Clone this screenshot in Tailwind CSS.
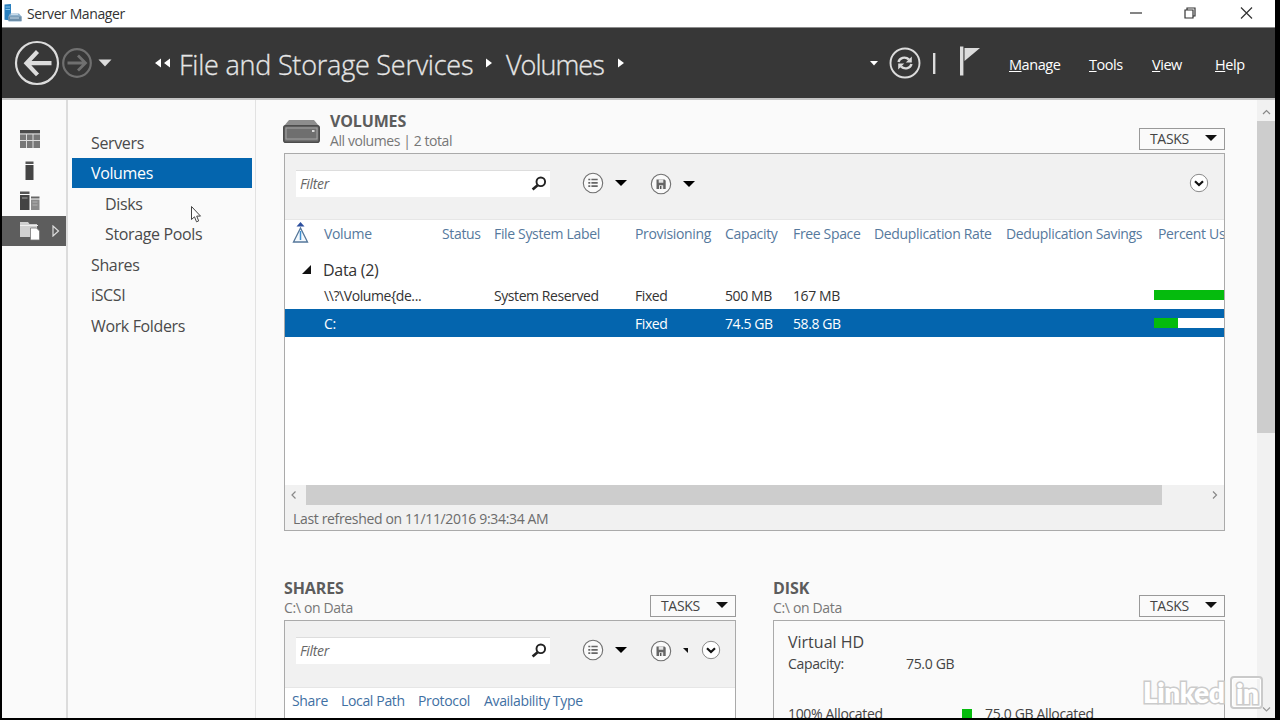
<!DOCTYPE html>
<html lang="en">
    <head>
        <meta charset="utf-8" />
        <title>Server Manager</title>
        <script src="https://cdn.jsdelivr.net/npm/@tailwindcss/browser@4"></script>
    </head>
    <body class="w-[1280px] h-[720px] overflow-hidden bg-black font-['Open_Sans','Noto_Sans',sans-serif]">
        <!-- shared icons -->
        <svg class="hidden">
            <symbol id="caret" viewBox="0 0 12 6"><path d="M0 0h12L6 6z" fill="currentColor" /></symbol>
            <symbol id="search" viewBox="0 0 16 16">
                <circle cx="9.8" cy="5.8" r="4.3" fill="none" stroke="#222" stroke-width="1.9" />
                <path d="M6.6 9.2L1.6 13.6" stroke="#222" stroke-width="2.6" />
            </symbol>
            <symbol id="list" viewBox="0 0 22 22">
                <circle cx="11" cy="11" r="9.7" fill="#fafafa" stroke="#707070" stroke-width="1.1" />
                <path d="M6.3 7.5h2M6.3 10.8h2M6.3 14.1h2M9.4 7.5h6.3M9.4 10.8h6.3M9.4 14.1h6.3" stroke="#666" stroke-width="1.7" />
            </symbol>
            <symbol id="save" viewBox="0 0 22 22">
                <circle cx="11" cy="11" r="9.7" fill="#fafafa" stroke="#707070" stroke-width="1.1" />
                <path d="M6.5 6.5h8l1.2 1.2v8.3H6.5z" fill="#666" />
                <path d="M8.7 6.5h4.6v3.2H8.7zM9 12.3h4.2V16H9z" fill="#e4e4e4" />
                <path d="M10 13h1.4v3H10z" fill="#555" />
            </symbol>
            <symbol id="expand" viewBox="0 0 20 20">
                <circle cx="10" cy="10" r="8.7" fill="#fff" stroke="#8a8a8a" stroke-width="1" />
                <path d="M6 8.3l4 3.8 4-3.8" fill="none" stroke="#111" stroke-width="2.2" />
            </symbol>
        </svg>

        <div class="relative flex flex-col w-[1273px] h-[718px] ml-[2px] overflow-hidden bg-[#fafafa] whitespace-nowrap">
            <div class="flex items-center h-[27px] bg-white shrink-0 pl-[2px] pb-px">
                <svg class="w-[18px] h-[20px]" viewBox="0 0 18 20">
                    <path d="M0.5 1.5L7 1v16.5l-6.5-.8z" fill="#2a80bf" />
                    <path d="M1.5 4h4.5M1.5 6.5h4.5" stroke="#7fc4ee" stroke-width="1" />
                    <path d="M6 10.5h9l2.5 3v5H4.500v-5z" fill="#8fb2cd" />
                    <path d="M4.500 13.500h13v4.500H4.500z" fill="#6d8ea8" />
                    <path d="M7 11.500h7M6 15h9" stroke="#c9dceb" />
                </svg>
                <p class="ml-[5px] text-[14px] tracking-[-0.4px] text-[#333]">Server Manager</p>
                <svg class="ml-auto mr-[22px] w-[124px] h-[16px]" viewBox="0 0 124 16" fill="none" stroke="#333" stroke-width="1.2">
                    <path d="M1 8h12" />
                    <path d="M56 5h8v8h-8zM58 5V3h8v8h-2" />
                    <path d="M112 2.500l11 11M123 2.500l-11 11" />
                </svg>
            </div>

            <header class="flex items-center h-[73px] shrink-0 bg-[#373737] border-t border-[#8c8c8c] border-b-2 border-b-[#c4c4c4] text-white">
                <svg class="w-[110px] h-[46px] ml-[12px]" viewBox="0 0 110 46" fill="none">
                    <circle cx="23" cy="23" r="21" stroke="#dcdcdc" stroke-width="2.200" />
                    <path d="M37.500 23.200H12M23.500 11.500L12.500 23.200l11 11.700" stroke="#dcdcdc" stroke-width="4.200" />
                    <circle cx="63" cy="23" r="13.800" stroke="#707070" stroke-width="2.200" />
                    <path d="M53.500 23h17M64 15.500l7.500 7.500-7.500 7.500" stroke="#707070" stroke-width="2.800" />
                    <path d="M84.500 19.500h13l-6.500 7z" fill="#dcdcdc" />
                </svg>
                <svg class="ml-[30px] w-[16px] h-[10px]" viewBox="0 0 16 10" fill="#fff"><path d="M7 .5v9L1 5zM16 .5v9l-6-4.500z" /></svg>
                <h1 class="ml-[9px] pt-[4px] text-[27px] font-light tracking-[-0.23px] text-[#e6e6e6] w-[296px] [-webkit-text-stroke:0.3px_#e6e6e6]">File and Storage Services</h1>
                <svg class="ml-[11px] w-[7px] h-[10px]" viewBox="0 0 7 10" fill="#fff"><path d="M0 .5v9L6 5z" /></svg>
                <h1 class="ml-[13px] pt-[4px] text-[27px] font-light tracking-[-1px] text-[#e6e6e6] w-[102px] [-webkit-text-stroke:0.3px_#e6e6e6]">Volumes</h1>
                <svg class="ml-[10px] w-[7px] h-[10px]" viewBox="0 0 7 10" fill="#fff"><path d="M0 .5v9L6 5z" /></svg>
                <svg class="ml-auto w-[112px] h-[36px]" viewBox="0 0 112 36" fill="none">
                    <path d="M1 16h8l-4 4.500z" fill="#fff" />
                    <circle cx="36" cy="18" r="14.500" stroke="#dcdcdc" stroke-width="1.900" />
                    <path d="M29.500 17c1-4 6.500-6 10.500-2.500M42.500 19c-1 4-6.500 6-10.500 2.500" stroke="#dcdcdc" stroke-width="2.400" />
                    <path d="M42.800 11.500v6h-6zM29.200 24.500v-6h6z" fill="#dcdcdc" />
                    <path d="M65.200 8v21" stroke="#dcdcdc" stroke-width="2.400" />
                    <path d="M92.700 1.500v29" stroke="#dcdcdc" stroke-width="3.400" />
                    <path d="M95.500 3h15.500L95.500 16z" fill="#dcdcdc" />
                </svg>
                <nav class="flex pt-[3px] text-[14.500px] tracking-[-0.45px] ml-[28px] mr-[29px]">
                    <p class="w-[80px]"><u>M</u>anage</p>
                    <p class="w-[63px]"><u>T</u>ools</p>
                    <p class="w-[63px]"><u>V</u>iew</p>
                    <p class="w-[31px]"><u>H</u>elp</p>
                </nav>
            </header>

            <div class="flex flex-1 min-h-0">
                <aside class="flex flex-col w-[64px] shrink-0 pt-[24px]">
                    <svg class="ml-[18px] w-[20px] h-[92px]" viewBox="0 0 20 92">
                        <path d="M0 6h20v18H0z" fill="#777" />
                        <path d="M0 6h20v3H0z" fill="#4c4c4c" />
                        <path d="M0 10h20M0 16.500h20M6.500 10v14M13 10v14" stroke="#ddd" />
                        <path d="M5.500 41h8v15h-8z" fill="#444" />
                        <path d="M5.500 37.500h8v2.500h-8z" fill="#555" />
                        <path d="M0 71h9.500v15H0z" fill="#444" />
                        <path d="M0 67.500h9.500V70H0z" fill="#555" />
                        <path d="M11 75.500h8.500V86H11z" fill="#8a8a8a" />
                        <path d="M11 72.500h8.500V74.500H11z" fill="#666" />
                        <path d="M2 74h5.500M12.500 78h5M12.500 81h5" stroke="#bbb" stroke-width=".8" />
                    </svg>
                    <div class="flex items-center h-[30px] bg-[#5d5d5d]">
                        <svg class="ml-[18px] w-[20px] h-[20px]" viewBox="0 0 20 20">
                            <path d="M0 1h8l1.500 2H17v13H0z" fill="#d0d0d0" />
                            <path d="M0 4.500h18" stroke="#efefef" />
                            <path d="M10.500 7h6l3 3v9h-9z" fill="#fff" stroke="#777" stroke-width=".8" />
                        </svg>
                        <svg class="ml-[12px] w-[8px] h-[12px]" viewBox="0 0 8 12"><path d="M1 1v10l5.500-5z" fill="none" stroke="#ddd" stroke-width="1.200" /></svg>
                    </div>
                </aside>

                <nav class="w-[190px] shrink-0 border-l-2 border-r border-l-[#dcdcdc] border-r-[#e2e2e2] pl-[4px] pr-[3px] pt-[27px] text-[16px] leading-[30.5px] tracking-[-0.36px] text-[#4a4a4a]">
                    <p class="pl-[19px] relative top-px">Servers</p>
                    <p class="pl-[19px] bg-[#0465ae] text-white">Volumes</p>
                    <p class="pl-[33px] relative top-px">Disks</p>
                    <p class="pl-[33px]">Storage Pools</p>
                    <p class="pl-[19px] relative top-px">Shares</p>
                    <p class="pl-[19px]">iSCSI</p>
                    <p class="pl-[19px] relative top-px">Work Folders</p>
                </nav>

                <main class="flex flex-col flex-1 pl-[28px] pr-[32px] min-w-0 text-[14px] tracking-[-0.34px]">
                    <div class="flex h-[53px] shrink-0">
                        <svg class="mt-[19px] -ml-px w-[37px] h-[26px]" viewBox="0 0 37 26">
                            <path d="M6 1h25l5 6H1z" fill="#8d8d8d" />
                            <rect x=".8" y="6.800" width="35.400" height="16.400" rx="2" fill="#6f6f6f" stroke="#4c4c4c" stroke-width="1.600" />
                            <rect x="3" y="9" width="31" height="11" fill="none" stroke="#a5a5a5" />
                            <path d="M29 12h2.500" stroke="#fff" stroke-width="1.500" />
                        </svg>
                        <div class="ml-[10px] pt-[11px]">
                            <h2 class="text-[16px] leading-[20px] font-bold tracking-[-0.15px] text-[#5c5c5c]">VOLUMES</h2>
                            <p class="leading-[20px] tracking-[-0.42px] text-[#777]">All volumes | 2 total</p>
                        </div>
                        <div class="flex items-center justify-between w-[86px] h-[22px] mt-[28px] ml-auto border border-[#999] pl-[10px] pr-[7px] pb-[2px] text-[#444]">
                            TASKS <svg class="w-[12px] h-[6px] text-[#111]"><use href="#caret" /></svg>
                        </div>
                    </div>

                    <section class="flex flex-col h-[378px] shrink-0 border border-[#aaa] bg-white">
                        <div class="flex items-start h-[66px] shrink-0 bg-[#f1f1f1] border-b border-[#e6e6e6] pt-[16px] pl-[11px]">
                            <div class="flex items-center justify-between w-[254px] h-[27px] bg-white border-t border-[#ddd] pl-[4px] pr-[3px] pb-px">
                                <i class="text-[#666]">Filter</i>
                                <svg class="w-[16px] h-[16px]"><use href="#search" /></svg>
                            </div>
                            <svg class="ml-[32px] mt-[2px] w-[22px] h-[22px]"><use href="#list" /></svg>
                            <svg class="ml-[11px] mt-[10px] w-[12px] h-[6px]"><use href="#caret" /></svg>
                            <svg class="ml-[23px] mt-[3px] w-[22px] h-[22px]"><use href="#save" /></svg>
                            <svg class="ml-[11px] mt-[11px] w-[12px] h-[6px]"><use href="#caret" /></svg>
                            <svg class="ml-auto mr-[15px] mt-[3px] w-[20px] h-[20px]"><use href="#expand" /></svg>
                        </div>
                        <div class="flex-1 overflow-hidden">
                            <div class="grid grid-cols-[39px_118px_52px_141px_90px_68px_81px_132px_152px_66px] h-[29px] leading-[27px] text-[#56799d]">
                                <svg class="ml-[7px] mt-[2px] w-[17px] h-[22px]" viewBox="0 0 17 22">
                                    <path d="M8.500 6L1.500 20h14z" fill="#f4f9fd" stroke="#55779a" stroke-width="1.300" />
                                    <path d="M8.500 9v9" stroke="#3f8fd0" stroke-width="1.500" />
                                    <path d="M4.500 4.500l4-4.500 4 4.500z" fill="#2d4f9e" />
                                </svg>
                                <p>Volume</p>
                                <p>Status</p>
                                <p>File System Label</p>
                                <p>Provisioning</p>
                                <p>Capacity</p>
                                <p>Free Space</p>
                                <p>Deduplication Rate</p>
                                <p>Deduplication Savings</p>
                                <p class="overflow-hidden">Percent Used</p>
                            </div>
                            <div class="flex items-center h-[33px] pt-[8px] pl-[17px] text-[16px] tracking-[-0.3px] text-[#333]">
                                <svg class="w-[9px] h-[9px] mr-[12px]" viewBox="0 0 9 9"><path d="M9 0v9H0z" fill="#111" /></svg>
                                Data (2)
                            </div>
                            <div class="grid grid-cols-[39px_170px_141px_90px_68px_361px_70px] items-center h-[27px] tracking-[-0.42px] text-[#333]">
                                <p class="col-start-2">\\?\Volume{de...</p>
                                <p>System Reserved</p>
                                <p>Fixed</p>
                                <p>500 MB</p>
                                <p>167 MB</p>
                                <div class="h-[10px] mb-px bg-[#05bb0d]"></div>
                            </div>
                            <div class="grid grid-cols-[39px_170px_141px_90px_68px_361px_70px] items-center h-[28px] bg-[#0465ae] tracking-[-0.42px] text-white">
                                <p class="col-start-2">C:</p>
                                <p></p>
                                <p>Fixed</p>
                                <p>74.5 GB</p>
                                <p>58.8 GB</p>
                                <div class="h-[10px] bg-white"><div class="w-[24px] h-full bg-[#05bb0d]"></div></div>
                            </div>
                        </div>
                        <div class="flex items-center h-[20px] shrink-0 bg-[#f1f1f1] px-[6px]">
                            <svg class="w-[6px] h-[8px]" viewBox="0 0 6 8"><path d="M4.500 .5L1 4l3.500 3.500" fill="none" stroke="#888" stroke-width="1.200" /></svg>
                            <div class="ml-[9px] w-[856px] h-[20px] bg-[#cdcdcd]"></div>
                            <svg class="ml-auto w-[6px] h-[8px]" viewBox="0 0 6 8"><path d="M1 .5L4.500 4 1 7.500" fill="none" stroke="#888" stroke-width="1.200" /></svg>
                        </div>
                        <p class="h-[25px] shrink-0 leading-[27px] pl-[8px] bg-[#f1f1f1] text-[#6c6c6c]">Last refreshed on 11/11/2016 9:34:34 AM</p>
                    </section>

                    <div class="flex gap-[37px] mt-[47px]">
                        <div class="w-[452px]">
                            <div class="flex h-[42px]">
                                <div>
                                    <h2 class="text-[16px] leading-[20px] font-bold tracking-[-0.1px] text-[#5c5c5c]">SHARES</h2>
                                    <p class="leading-[20px] text-[#777]">C:\ on Data</p>
                                </div>
                                <div class="flex items-center justify-between w-[86px] h-[22px] mt-[17px] ml-auto border border-[#999] pl-[10px] pr-[7px] pb-[2px] text-[#444]">
                                    TASKS <svg class="w-[12px] h-[6px] text-[#111]"><use href="#caret" /></svg>
                                </div>
                            </div>
                            <section class="h-[120px] border border-[#aaa] bg-white">
                                <div class="flex items-start h-[67px] bg-[#f1f1f1] border-b border-[#e6e6e6] pt-[16px] pl-[11px]">
                                    <div class="flex items-center justify-between w-[254px] h-[27px] bg-white border-t border-[#ddd] pl-[4px] pr-[3px] pb-px">
                                        <i class="text-[#666]">Filter</i>
                                        <svg class="w-[16px] h-[16px]"><use href="#search" /></svg>
                                    </div>
                                    <svg class="ml-[32px] mt-[2px] w-[22px] h-[22px]"><use href="#list" /></svg>
                                    <svg class="ml-[11px] mt-[10px] w-[12px] h-[6px]"><use href="#caret" /></svg>
                                    <svg class="ml-[23px] mt-[3px] w-[22px] h-[22px]"><use href="#save" /></svg>
                                    <svg class="ml-[11px] mt-[11px] w-[5px] h-[5px]" viewBox="0 0 5 5"><path d="M0 0h5v5z" fill="#111" /></svg>
                                    <svg class="ml-auto mr-[14px] mt-[3px] w-[20px] h-[20px]"><use href="#expand" /></svg>
                                </div>
                                <div class="grid grid-cols-[49px_77px_66px_115px] pl-[7px] leading-[26px] text-[#3f70a3]">
                                    <p>Share</p>
                                    <p>Local Path</p>
                                    <p>Protocol</p>
                                    <p>Availability Type</p>
                                </div>
                            </section>
                        </div>

                        <div class="w-[452px]">
                            <div class="flex h-[42px]">
                                <div>
                                    <h2 class="text-[16px] leading-[20px] font-bold tracking-[-0.1px] text-[#5c5c5c]">DISK</h2>
                                    <p class="leading-[20px] text-[#777]">C:\ on Data</p>
                                </div>
                                <div class="flex items-center justify-between w-[86px] h-[22px] mt-[17px] ml-auto border border-[#999] pl-[10px] pr-[7px] pb-[2px] text-[#444]">
                                    TASKS <svg class="w-[12px] h-[6px] text-[#111]"><use href="#caret" /></svg>
                                </div>
                            </div>
                            <section class="h-[120px] border border-[#aaa] pl-[14px] pt-[10px] text-[#444]">
                                <h3 class="text-[16px] leading-[23px] tracking-[0px]">Virtual HD</h3>
                                <div class="flex leading-[20px]">
                                    <p class="w-[118px]">Capacity:</p>
                                    <p>75.0 GB</p>
                                </div>
                                <div class="flex items-center mt-[29px] leading-[22px]">
                                    <p class="w-[174px]">100% Allocated</p>
                                    <div class="w-[10px] h-[10px] bg-[#05bb0d]"></div>
                                    <p class="ml-[13px]">75.0 GB Allocated</p>
                                </div>
                            </section>
                        </div>
                    </div>
                </main>

                <div class="w-[18px] shrink-0 bg-[#f1f1f1]">
                    <svg class="w-[18px] h-[21px]" viewBox="0 0 18 21"><path d="M6 14l3.500-3.500L13 14" fill="none" stroke="#888" stroke-width="1.200" /></svg>
                    <div class="h-[312px] bg-[#cdcdcd]"></div>
                </div>
            </div>

            <!-- mouse pointer -->
            <svg class="absolute left-[188px] top-[205px] w-[13px] h-[19px]" viewBox="0 0 13 19">
                <path d="M1.500 1.500v13l3-2.700 2 5 2.200-.9-2-4.800h3.800z" fill="#fff" stroke="#444" />
            </svg>

            <!-- watermark -->
            <div class="absolute left-[1141px] top-[675px] flex items-center text-[28px] leading-[34px] font-extrabold font-[Lato,'Open_Sans',sans-serif] tracking-[-0.5px] text-white [-webkit-text-stroke:3px_#cbcbcb] [paint-order:stroke_fill]">
                <p class="w-[87px]">Linked</p>
                <p class="w-[33px] h-[33px] leading-[30px] pl-[4px] rounded-[4px] border-2 border-[#cacaca] ring-1 ring-inset ring-white">in</p>
            </div>
            <svg class="absolute left-[1260px] top-[706px] w-[9px] h-[7px]" viewBox="0 0 9 7"><path d="M1 1.500L4.500 5 8 1.500" fill="none" stroke="#999" stroke-width="1.200" /></svg>
        </div>
    </body>
</html>
